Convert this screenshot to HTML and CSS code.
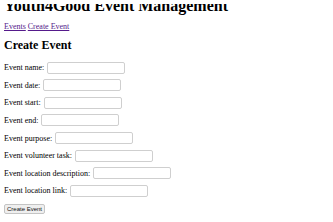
FILE: index.html
```html
<!doctype html>
<html lang="en">
  <head>
    <meta charset="UTF-8" />
    <meta name="viewport" content="width=device-width, initial-scale=1.0" />
    <title>Youth4Good Event Management</title>
    <link rel="stylesheet" href="styles.css">
  </head>
  <body>
    <h1 class="site-title">Youth4Good Event Management</h1>
    <nav class="site-nav">
      <a href="#events">Events</a>
      <a href="#create">Create Event</a>
    </nav>
    <h2 class="page-title">Create Event</h2>
    <form class="event-form">
      <p class="field"><label for="name">Event name:</label><input type="text" id="name" name="name"></p>
      <p class="field"><label for="date">Event date:</label><input type="text" id="date" name="date"></p>
      <p class="field"><label for="start">Event start:</label><input type="text" id="start" name="start"></p>
      <p class="field"><label for="end">Event end:</label><input type="text" id="end" name="end"></p>
      <p class="field"><label for="purpose">Event purpose:</label><input type="text" id="purpose" name="purpose"></p>
      <p class="field"><label for="task">Event volunteer task:</label><input type="text" id="task" name="task"></p>
      <p class="field"><label for="locdesc">Event location description:</label><input type="text" id="locdesc" name="locdesc"></p>
      <p class="field"><label for="loclink">Event location link:</label><input type="text" id="loclink" name="loclink"></p>
      <button class="submit" type="submit">Create Event</button>
    </form>
  </body>
</html>
```

FILE: styles.css
```css
html,
body {
  background: #fff;
}
body {
  margin: 4px;
  font-family: "Liberation Serif", serif;
  font-size: 8px;
  color: #000;
}
.site-title {
  font-size: 16px;
  line-height: 18.4px;
  margin: -6.8px 0 5.9px;
}
.site-nav {
  line-height: 9.2px;
}
.site-nav a {
  color: #551a8b;
}
.page-title {
  font-size: 12px;
  line-height: 13.8px;
  margin: 8.4px 0 10px;
}
.field {
  display: flex;
  align-items: center;
  gap: 3px;
  height: 9.6px;
  margin: 8px 0;
}
.field input {
  box-sizing: border-box;
  width: 78px;
  height: 12px;
  padding: 0 2px;
  border: 1px solid #cfcfcf;
  border-radius: 2px;
  font-size: 6px;
  background: #fff;
}
.submit {
  box-sizing: border-box;
  height: 10px;
  padding: 0 2px;
  margin-top: 0.4px;
  border: 1px solid #c4c4c4;
  border-radius: 2px;
  background: #efefef;
  color: #111;
  font-family: "Liberation Sans", sans-serif;
  font-size: 6px;
  line-height: 8px;
}
```
